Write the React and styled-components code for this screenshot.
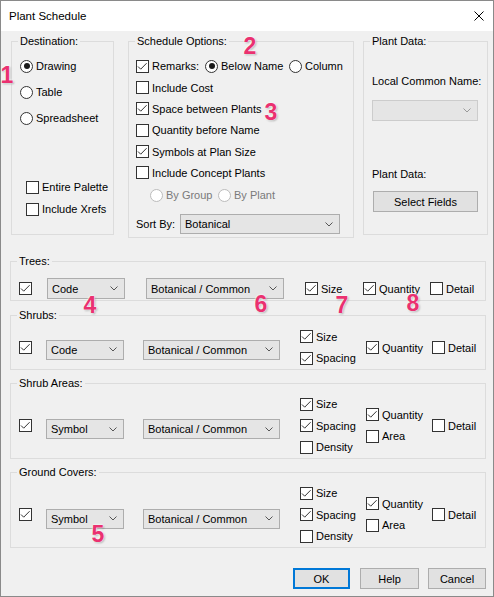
import React from "react";
import styled, { createGlobalStyle } from "styled-components";

const GlobalStyle = createGlobalStyle`
  html, body {
    margin: 0;
    padding: 0;
    background: #ffffff;
  }
  * {
    box-sizing: border-box;
  }
`;

const Window = styled.div`
  position: relative;
  width: 494px;
  height: 597px;
  border: 1px solid #8a8a8a;
  background: #f0f0f0;
  display: flex;
  flex-direction: column;
  font-family: "Liberation Sans", Arial, sans-serif;
  font-size: 11px;
  color: #000;
  overflow: hidden;
`;

const TitleBar = styled.div`
  height: 30px;
  background: #ffffff;
  display: flex;
  align-items: center;
  justify-content: space-between;
  padding: 0 9px 0 8px;
  font-size: 11.5px;
`;

const Body = styled.div`
  flex: 1;
  display: flex;
  flex-direction: column;
  padding: 0 7px 0 9px;
`;

const TopRow = styled.div`
  display: flex;
  align-items: flex-start;
  margin: 10px 0 0 1px;
`;

const Group = styled.div`
  position: relative;
  flex-shrink: 0;
  width: ${(p) => p.$w || 476}px;
  height: ${(p) => p.$h}px;
  margin-left: ${(p) => p.$ml || 0}px;
  margin-top: ${(p) => p.$mt || 0}px;
  border: 1px solid #dcdcdc;
  padding: ${(p) => p.$pad || "0"};
`;

const Legend = styled.span`
  position: absolute;
  top: -8px;
  left: 6px;
  padding: 0 2px;
  line-height: 14px;
  background: #f0f0f0;
  white-space: nowrap;
`;

const Column = styled.div`
  display: flex;
  flex-direction: column;
  padding-left: ${(p) => p.$pl || 0}px;
  margin-top: ${(p) => p.$mt || 0}px;
`;

const Line = styled.div`
  height: ${(p) => p.$h || 21}px;
  display: flex;
  align-items: center;
  padding-left: ${(p) => p.$pl || 0}px;
  margin-top: ${(p) => p.$mt || 0}px;
`;

const Option = styled.label`
  display: inline-flex;
  align-items: center;
  gap: 3px;
  white-space: nowrap;
  width: ${(p) => (p.$w ? `${p.$w}px` : "auto")};
  color: ${(p) => (p.$disabled ? "#7a7a7a" : "#000")};
`;

const Box = styled.span`
  width: 13px;
  height: 13px;
  flex-shrink: 0;
  border: 1px solid #333;
  background: #fff;
  display: inline-flex;
  align-items: center;
  justify-content: center;
`;

const Circle = styled.span`
  width: 13px;
  height: 13px;
  flex-shrink: 0;
  border-radius: 50%;
  border: 1px solid ${(p) => (p.$disabled ? "#bcbcbc" : "#333")};
  background: #fff;
  display: inline-flex;
  align-items: center;
  justify-content: center;

  &::after {
    content: "";
    display: ${(p) => (p.$on ? "block" : "none")};
    width: 6px;
    height: 6px;
    border-radius: 50%;
    background: #1a1a1a;
  }
`;

const Combo = styled.div`
  width: ${(p) => p.$w}px;
  height: ${(p) => p.$h || 20}px;
  margin-top: ${(p) => p.$drop || 0}px;
  border: 1px solid ${(p) => (p.$disabled ? "#cccccc" : "#adadad")};
  background: #e5e5e5;
  display: flex;
  align-items: center;
  justify-content: space-between;
  padding: 0 6px 0 4px;
  white-space: nowrap;
`;

const Button = styled.div`
  width: ${(p) => p.$w}px;
  height: 21px;
  border: ${(p) => (p.$default ? "2px solid #0078d7" : "1px solid #adadad")};
  background: #e1e1e1;
  display: flex;
  align-items: center;
  justify-content: center;
  margin-left: ${(p) => p.$ml || 0}px;
`;

const Rows = styled.div`
  height: 100%;
  display: grid;
  grid-template-columns: ${(p) => p.$cols};
  grid-template-rows: 100%;
  align-items: center;
`;

const Stack = styled.div`
  display: flex;
  flex-direction: column;
`;

const StackRow = styled.div`
  height: 21.5px;
  display: flex;
  align-items: center;
`;

const Buttons = styled.div`
  display: flex;
  justify-content: flex-end;
  margin-top: 20px;
`;

const Marker = styled.span`
  position: absolute;
  width: 16px;
  text-align: center;
  line-height: 22px;
  font-family: "Liberation Sans", Arial, sans-serif;
  font-weight: bold;
  font-size: 23px;
  color: #ea3170;
  text-shadow: 0 0 2px #fff, 0 0 2px #fff, 1px 1px 2px rgba(0, 0, 0, 0.35);
  left: ${(p) => p.$x - 8}px;
  top: ${(p) => p.$y - 11}px;
  pointer-events: none;
`;

const Chevron = ({ color = "#555" }) => (
  <svg width="8" height="5" viewBox="0 0 8 5">
    <polyline points="0.5,0.5 4,4 7.5,0.5" fill="none" stroke={color} strokeWidth="1" />
  </svg>
);

const Check = ({ on, children }) => (
  <Option>
    <Box>
      {on && (
        <svg width="11" height="11" viewBox="0 0 11 11">
          <polyline points="1,5.5 3.7,8.2 9.6,2.2" fill="none" stroke="#333" strokeWidth="1" />
        </svg>
      )}
    </Box>
    {children}
  </Option>
);

const Radio = ({ on, disabled, w, children }) => (
  <Option $w={w} $disabled={disabled}>
    <Circle $on={on} $disabled={disabled} />
    {children}
  </Option>
);

const Select = ({ w, h, drop, disabled, children }) => (
  <Combo $w={w} $h={h} $drop={drop} $disabled={disabled}>
    <span>{children}</span>
    <Chevron color={disabled ? "#999" : "#555"} />
  </Combo>
);

const WIDE = "27px 97px 157px 66px 66px 1fr";
const TREES = "28px 99px 159px 58px 67px 1fr";

function PlantGroup({ title, h, mt, pad, cols, drop, kind, combo, sizes, qty }) {
  return (
    <Group $h={h} $mt={mt} $pad={`${pad}px 0 0 8px`}>
      <Legend>{title}</Legend>
      <Rows $cols={cols}>
        <Check on />
        <Select w={78} h={kind === "trees" ? 21 : 20} drop={drop}>{combo}</Select>
        <Select w={kind === "trees" ? 138 : 137} h={kind === "trees" ? 21 : 20} drop={drop}>
          Botanical / Common
        </Select>
        <Stack>
          {sizes.map(([label, on]) => (
            <StackRow key={label}>
              <Check on={on}>{label}</Check>
            </StackRow>
          ))}
        </Stack>
        <Stack>
          {qty.map(([label, on]) => (
            <StackRow key={label}>
              <Check on={on}>{label}</Check>
            </StackRow>
          ))}
        </Stack>
        <Check>Detail</Check>
      </Rows>
    </Group>
  );
}

export default function App() {
  return (
    <>
      <GlobalStyle />
      <Window>
        <TitleBar>
          <span>Plant Schedule</span>
          <svg width="10" height="10" viewBox="0 0 10 10">
            <path d="M0.5 0.5 L9.5 9.5 M9.5 0.5 L0.5 9.5" stroke="#000" strokeWidth="1" fill="none" />
          </svg>
        </TitleBar>

        <Body>
          <TopRow>
            <Group $w={103} $h={194} $pad="11px 0 0 8px">
              <Legend>Destination:</Legend>
              <Column>
                <Line $h={26}><Radio on>Drawing</Radio></Line>
                <Line $h={26}><Radio>Table</Radio></Line>
                <Line $h={26}><Radio>Spreadsheet</Radio></Line>
              </Column>
              <Column $mt={45} $pl={6}>
                <Line $h={22}><Check>Entire Palette</Check></Line>
                <Line $h={22}><Check>Include Xrefs</Check></Line>
              </Column>
            </Group>

            <Group $w={226} $h={197} $ml={14} $pad="13px 0 0 7px">
              <Legend>Schedule Options:</Legend>
              <Column>
                <Line $h={22}>
                  <Option $w={69}>
                    <Box>
                      <svg width="11" height="11" viewBox="0 0 11 11">
                        <polyline points="1,5.5 3.7,8.2 9.6,2.2" fill="none" stroke="#333" strokeWidth="1" />
                      </svg>
                    </Box>
                    Remarks:
                  </Option>
                  <Radio on w={84}>Below Name</Radio>
                  <Radio>Column</Radio>
                </Line>
                <Line $h={21.3}><Check>Include Cost</Check></Line>
                <Line $h={21.3}><Check on>Space between Plants</Check></Line>
                <Line $h={21.3}><Check>Quantity before Name</Check></Line>
                <Line $h={21.3}><Check on>Symbols at Plan Size</Check></Line>
                <Line $h={21.3}><Check>Include Concept Plants</Check></Line>
                <Line $h={24} $pl={14}>
                  <Radio disabled w={68}>By Group</Radio>
                  <Radio disabled>By Plant</Radio>
                </Line>
                <Line $h={20} $mt={7}>
                  <Option $w={44}>Sort By:</Option>
                  <Select w={160}>Botanical</Select>
                </Line>
              </Column>
            </Group>

            <Group $w={125} $h={194} $ml={9} $pad="0 0 0 8px">
              <Legend>Plant Data:</Legend>
              <Column>
                <Line $h={14} $mt={32}>Local Common Name:</Line>
                <Line $h={21} $mt={12}>
                  <Select w={106} h={21} disabled />
                </Line>
                <Line $h={14} $mt={46}>Plant Data:</Line>
                <Line $h={21} $mt={10}>
                  <Button $w={105} $ml={1}>Select Fields</Button>
                </Line>
              </Column>
            </Group>
          </TopRow>

          <PlantGroup
            title="Trees:"
            kind="trees"
            h={40}
            mt={23}
            pad={15}
            cols={TREES}
            drop={0}
            combo="Code"
            sizes={[["Size", true]]}
            qty={[["Quantity", true]]}
          />
          <PlantGroup
            title="Shrubs:"
            h={55}
            mt={14}
            pad={10}
            cols={WIDE}
            drop={4}
            combo="Code"
            sizes={[["Size", true], ["Spacing", true]]}
            qty={[["Quantity", true]]}
          />
          <PlantGroup
            title="Shrub Areas:"
            h={76}
            mt={13}
            pad={9}
            cols={WIDE}
            drop={7}
            combo="Symbol"
            sizes={[["Size", true], ["Spacing", true], ["Density", false]]}
            qty={[["Quantity", true], ["Area", false]]}
          />
          <PlantGroup
            title="Ground Covers:"
            h={76}
            mt={13}
            pad={9}
            cols={WIDE}
            drop={8}
            combo="Symbol"
            sizes={[["Size", true], ["Spacing", true], ["Density", false]]}
            qty={[["Quantity", true], ["Area", false]]}
          />

          <Buttons>
            <Button $w={57} $default>OK</Button>
            <Button $w={59} $ml={10}>Help</Button>
            <Button $w={58} $ml={9}>Cancel</Button>
          </Buttons>
        </Body>

        <Marker $x={6} $y={74}>1</Marker>
        <Marker $x={249} $y={45}>2</Marker>
        <Marker $x={270} $y={111}>3</Marker>
        <Marker $x={89} $y={304}>4</Marker>
        <Marker $x={97} $y={533}>5</Marker>
        <Marker $x={260} $y={303}>6</Marker>
        <Marker $x={341} $y={304}>7</Marker>
        <Marker $x={412} $y={302}>8</Marker>
      </Window>
    </>
  );
}
